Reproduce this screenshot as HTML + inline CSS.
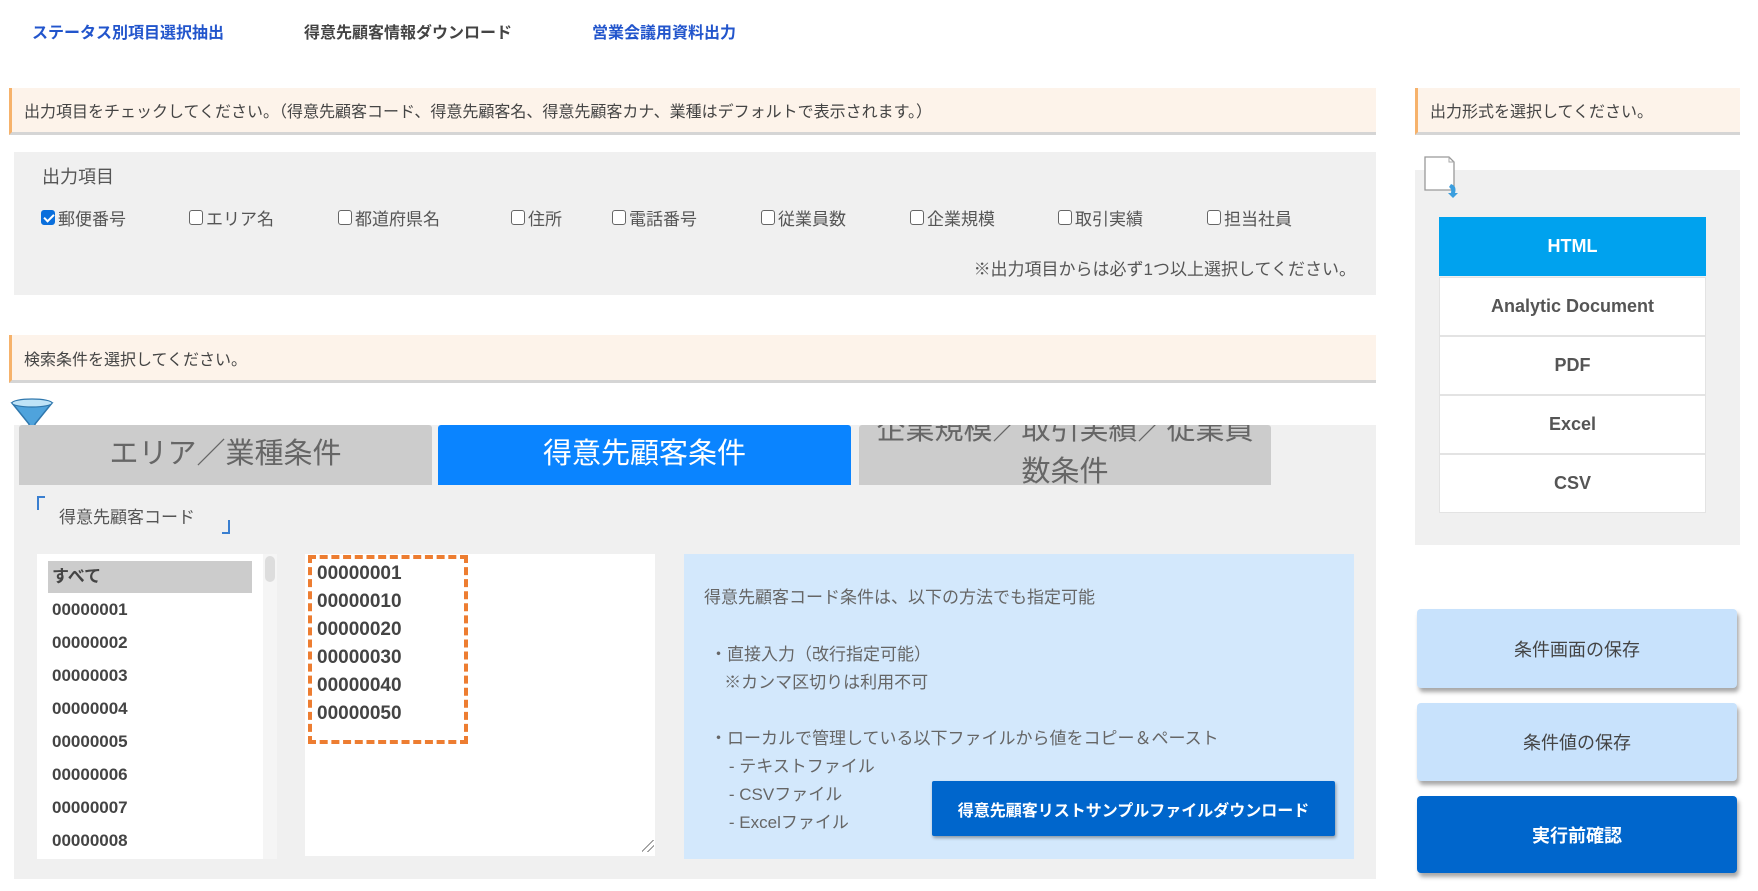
<!DOCTYPE html>
<html><head><meta charset="utf-8"><style>
*{box-sizing:border-box;margin:0;padding:0}
body{width:1758px;height:891px;background:#fff;font-family:"Liberation Sans","Noto Sans CJK JP",sans-serif;color:#555;position:relative;overflow:hidden}
.a{position:absolute}
.nav{top:19px;font-size:16px;font-weight:bold}
.notice{background:#fdf3ea;border-left:3px solid #f6b26b;border-bottom:3px solid #d5d5d5;font-size:16px;color:#444;padding-left:12px;display:flex;align-items:center}
.gray{background:#f0f0f0}
.cb{top:205px;font-size:17px;color:#555;display:flex;align-items:center}
.cb i{display:inline-block;width:14px;height:15px;border:1px solid #666;border-radius:3px;margin-right:3px;background:#fff}
.cb i.on{background:#0a6fdc;border-color:#0a6fdc;position:relative}
.cb i.on:after{content:"";position:absolute;left:4px;top:1px;width:4px;height:8px;border:solid #fff;border-width:0 2px 2px 0;transform:rotate(45deg)}
.tab{top:425px;height:60px;font-size:29px;text-align:center;line-height:58px;overflow:hidden;border-radius:3px 3px 0 0}
.li{left:52px;font-size:17px;color:#444;font-weight:bold;height:33px;line-height:33px}
.num{left:317px;font-size:19px;font-weight:bold;color:#444;line-height:28px}
.fmt{left:1439px;width:267px;background:#fff;border:1px solid #e3e3e3;text-align:center;font-weight:bold;font-size:18px;color:#555;display:flex;align-items:center;justify-content:center}
.btn{left:1417px;width:320px;border-radius:4px;box-shadow:2px 4px 4px rgba(0,0,0,.35);display:flex;align-items:center;justify-content:center;font-size:18px}
.info{font-size:17px;color:#666}
</style></head><body>
<div class="a nav" style="left:32px;color:#2255cc">ステータス別項目選択抽出</div>
<div class="a nav" style="left:304px;color:#444">得意先顧客情報ダウンロード</div>
<div class="a nav" style="left:592px;color:#2255cc">営業会議用資料出力</div>

<div class="a notice" style="left:9px;top:88px;width:1367px;height:47px">出力項目をチェックしてください。（得意先顧客コード、得意先顧客名、得意先顧客カナ、業種はデフォルトで表示されます。）</div>
<div class="a gray" style="left:14px;top:152px;width:1362px;height:143px"></div>
<div class="a" style="left:42px;top:163px;font-size:18px;color:#555">出力項目</div>
<div class="a cb" style="left:41px"><i class="on"></i>郵便番号</div>
<div class="a cb" style="left:189px"><i></i>エリア名</div>
<div class="a cb" style="left:338px"><i></i>都道府県名</div>
<div class="a cb" style="left:511px"><i></i>住所</div>
<div class="a cb" style="left:612px"><i></i>電話番号</div>
<div class="a cb" style="left:761px"><i></i>従業員数</div>
<div class="a cb" style="left:910px"><i></i>企業規模</div>
<div class="a cb" style="left:1058px"><i></i>取引実績</div>
<div class="a cb" style="left:1207px"><i></i>担当社員</div>
<div class="a" style="right:402px;top:255px;font-size:17px;color:#555">※出力項目からは必ず1つ以上選択してください。</div>

<div class="a notice" style="left:9px;top:335px;width:1367px;height:48px">検索条件を選択してください。</div>
<div class="a gray" style="left:14px;top:425px;width:1362px;height:454px"></div>
<svg class="a" style="left:10px;top:398px" width="44" height="48" viewBox="0 0 44 48"><path d="M2 5 L42 5 L25 26 L24 46 L20 46 L19 26 Z" fill="#4fa3dc" stroke="#2f77ad" stroke-width="1.5"/><ellipse cx="22" cy="5" rx="20" ry="4" fill="#bfe3f7" stroke="#2f77ad" stroke-width="1.2"/></svg>
<div class="a tab" style="left:19px;width:413px;background:#cccccc;color:#666">エリア／業種条件</div>
<div class="a tab" style="left:438px;width:413px;background:#0a84ff;color:#fff">得意先顧客条件</div>
<div class="a tab" style="left:859px;width:412px;background:#cccccc;color:#666;line-height:42px"><div style="margin-top:-16px">企業規模／取引実績／従業員<br>数条件</div></div>

<div class="a" style="left:37px;top:496px;width:8px;height:14px;border-left:2px solid #3a7fd0;border-top:2px solid #3a7fd0"></div>
<div class="a" style="left:59px;top:503px;font-size:17px;color:#555">得意先顧客コード</div>
<div class="a" style="left:222px;top:520px;width:8px;height:14px;border-right:2px solid #3a7fd0;border-bottom:2px solid #3a7fd0"></div>

<div class="a" style="left:37px;top:554px;width:240px;height:305px;background:#fff"></div>
<div class="a" style="left:263px;top:554px;width:14px;height:305px;background:#f5f5f5"></div>
<div class="a" style="left:265px;top:556px;width:10px;height:26px;background:#ddd;border-radius:5px"></div>
<div class="a" style="left:48px;top:561px;width:204px;height:32px;background:#cccccc"></div>
<div class="a li" style="top:560px">すべて</div>
<div class="a li" style="top:593px">00000001</div>
<div class="a li" style="top:626px">00000002</div>
<div class="a li" style="top:659px">00000003</div>
<div class="a li" style="top:692px">00000004</div>
<div class="a li" style="top:725px">00000005</div>
<div class="a li" style="top:758px">00000006</div>
<div class="a li" style="top:791px">00000007</div>
<div class="a li" style="top:824px">00000008</div>

<div class="a" style="left:305px;top:554px;width:350px;height:302px;background:#fff"></div>
<div class="a" style="left:308px;top:555px;width:160px;height:189px;border:4px dashed #ed7d31"></div>
<div class="a num" style="top:560px">00000001<br>00000010<br>00000020<br>00000030<br>00000040<br>00000050</div>
<div class="a" style="left:642px;top:840px;width:12px;height:12px;background:linear-gradient(135deg,transparent 45%,#888 45%,#888 52%,transparent 52%,transparent 70%,#888 70%,#888 77%,transparent 77%)"></div>

<div class="a" style="left:684px;top:554px;width:670px;height:305px;background:#d3e8fc"></div>
<div class="a info" style="left:704px;top:583px">得意先顧客コード条件は、以下の方法でも指定可能</div>
<div class="a info" style="left:710px;top:641px;line-height:28px">・直接入力（改行指定可能）<br>&nbsp;&nbsp;&nbsp;※カンマ区切りは利用不可</div>
<div class="a info" style="left:710px;top:725px;line-height:28px">・ローカルで管理している以下ファイルから値をコピー＆ペースト<br>&nbsp;&nbsp;&nbsp;&nbsp;- テキストファイル<br>&nbsp;&nbsp;&nbsp;&nbsp;- CSVファイル<br>&nbsp;&nbsp;&nbsp;&nbsp;- Excelファイル</div>
<div class="a" style="left:932px;top:781px;width:403px;height:55px;background:#0066cc;color:#fff;font-weight:bold;font-size:16px;display:flex;align-items:center;justify-content:center;box-shadow:1px 2px 3px rgba(0,0,0,.35);border-radius:2px">得意先顧客リストサンプルファイルダウンロード</div>

<div class="a notice" style="left:1415px;top:88px;width:325px;height:47px">出力形式を選択してください。</div>
<div class="a gray" style="left:1415px;top:170px;width:325px;height:375px"></div>
<svg class="a" style="left:1423px;top:156px" width="38" height="44" viewBox="0 0 38 44"><path d="M2 1 H26 L31 6 V34 H2 Z" fill="#fff" stroke="#999" stroke-width="1.3"/><path d="M26 1 V6 H31" fill="none" stroke="#aaa"/><path d="M28 28 q6 2 4 9 l3 0 -5 5 -5 -5 3 0 q1 -4 -2 -6z" fill="#3b9ede"/></svg>
<div class="a fmt" style="top:217px;height:59px;background:#00a2ee;border-color:#00a2ee;color:#fff">HTML</div>
<div class="a fmt" style="top:277px;height:59px">Analytic Document</div>
<div class="a fmt" style="top:336px;height:59px">PDF</div>
<div class="a fmt" style="top:395px;height:59px">Excel</div>
<div class="a fmt" style="top:454px;height:59px">CSV</div>

<div class="a btn" style="top:609px;height:79px;background:#c8e2fc;color:#444">条件画面の保存</div>
<div class="a btn" style="top:703px;height:78px;background:#c8e2fc;color:#444">条件値の保存</div>
<div class="a btn" style="top:796px;height:77px;background:#0066cc;color:#fff;font-weight:bold">実行前確認</div>
</body></html>
